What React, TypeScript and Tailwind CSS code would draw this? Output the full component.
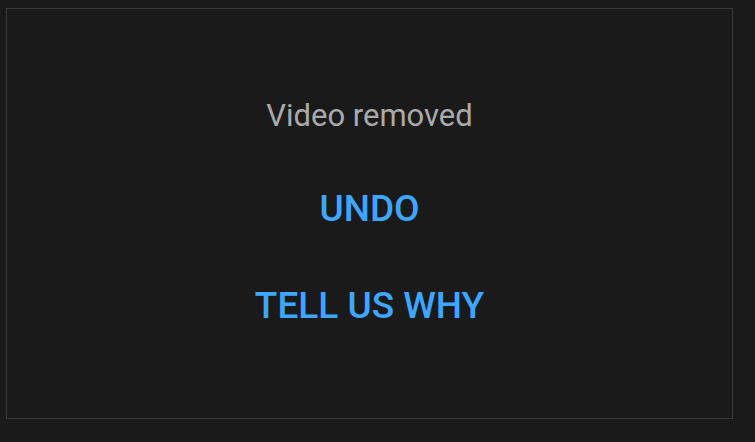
export default function App() {
  return (
    <div className="w-[755px] h-[442px] bg-[#1a1a1a] pt-2 pl-1.5 font-['Roboto',sans-serif]">
      <div className="w-[727px] h-[411px] border border-[#3a3a3a] pb-[6px] flex flex-col items-center justify-center">
        <p className="text-[31px] leading-[40px] text-[#aaaaaa]">Video removed</p>
        <button className="mt-[53px] text-[37px] leading-[40px] font-medium text-[#3ea6ff]">UNDO</button>
        <button className="mt-[57px] text-[37px] leading-[40px] font-medium text-[#3ea6ff]">TELL US WHY</button>
      </div>
    </div>
  )
}
